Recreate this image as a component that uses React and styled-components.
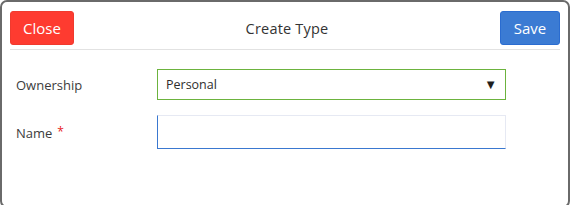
import React from "react";
import styled, { createGlobalStyle } from "styled-components";

const GlobalStyle = createGlobalStyle`
  html, body {
    margin: 0;
    padding: 0;
    background: #ffffff;
  }
  * {
    box-sizing: border-box;
  }
`;

const Modal = styled.div`
  width: 570px;
  height: 208px;
  border: 2px solid #6a6a6a;
  border-radius: 7px;
  background: #ffffff;
  font-family: "Open Sans", "Noto Sans", sans-serif;
  overflow: hidden;
`;

const Header = styled.div`
  display: flex;
  align-items: center;
  justify-content: space-between;
  margin: 9px 8px 0;
  padding-bottom: 4px;
  border-bottom: 1px solid #e2e2e2;
`;

const Button = styled.button`
  height: 34px;
  width: ${(p) => p.$width}px;
  border-radius: 3px;
  border: 1px solid ${(p) => (p.$variant === "danger" ? "#f03a2e" : "#2a6cd0")};
  background: ${(p) => (p.$variant === "danger" ? "#fe3b30" : "#3b7bd3")};
  color: #ffffff;
  font-family: "Open Sans", "Noto Sans", sans-serif;
  font-size: 15px;
  padding: 0;
  cursor: pointer;
`;

const Title = styled.div`
  font-size: 14.5px;
  color: #333333;
  letter-spacing: 0.2px;
`;

const Form = styled.div`
  display: grid;
  grid-template-columns: 141px 349px;
  row-gap: 15px;
  align-items: center;
  padding: 19px 0 0 14px;
`;

const Label = styled.div`
  font-size: 13px;
  color: #3c3c3c;
`;

const Required = styled.span`
  color: #e8211d;
  font-size: 12px;
  margin-left: 5px;
  vertical-align: 2px;
`;

const SelectBox = styled.div`
  height: 31px;
  border: 1px solid #6cb33e;
  display: flex;
  align-items: center;
  justify-content: space-between;
  padding: 0 8px 0 8px;
  font-size: 12.5px;
  color: #2e2e2e;
`;

const Arrow = styled.span`
  font-size: 13px;
  color: #1e1e1e;
  line-height: 1;
`;

const TextInput = styled.input`
  height: 34px;
  width: 100%;
  border: 1px solid #e6e9f3;
  border-left-color: #3a78d0;
  border-bottom-color: #3a78d0;
  border-radius: 0;
  outline: none;
  padding: 0 8px;
  font-family: "Open Sans", "Noto Sans", sans-serif;
  font-size: 13px;
`;

export default function App() {
  return (
    <>
      <GlobalStyle />
      <Modal>
        <Header>
          <Button $variant="danger" $width={64}>
            Close
          </Button>
          <Title>Create Type</Title>
          <Button $variant="primary" $width={60}>
            Save
          </Button>
        </Header>
        <Form>
          <Label>Ownership</Label>
          <SelectBox>
            <span>Personal</span>
            <Arrow>▼</Arrow>
          </SelectBox>
          <Label>
            Name<Required>*</Required>
          </Label>
          <TextInput type="text" />
        </Form>
      </Modal>
    </>
  );
}
